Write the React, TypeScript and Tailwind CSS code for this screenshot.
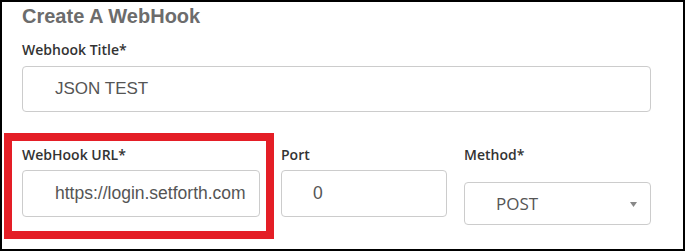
import React from "react";

const labelCls =
  "block text-[14px] leading-[20px] font-semibold text-[#333333] [font-family:'Open_Sans',sans-serif]";
const inputCls =
  "flex items-center border border-[#cccccc] rounded-[4px] bg-white text-[#555555] [font-family:'Liberation_Sans',Arial,sans-serif]";

export default function App() {
  return (
    <div className="relative w-[685px] h-[251px] border-2 border-black bg-white box-border overflow-hidden">
      <div className="pl-[20px] pt-[2px]">
        <h1 className="text-[20px] leading-[24px] font-bold text-[#6c6c6c] [font-family:'Liberation_Sans',Arial,sans-serif]">
          Create A WebHook
        </h1>
        <div className="mt-[12px]">
          <label className={labelCls}>Webhook Title*</label>
          <div className={`${inputCls} mt-[6px] w-[629px] h-[46px] pl-[32px] text-[17px]`}>
            JSON TEST
          </div>
        </div>
        <div className="mt-[33px] flex items-start">
          <div className="w-[238px]">
            <label className={labelCls}>WebHook URL*</label>
            <div className={`${inputCls} mt-[5px] w-[238px] h-[47px] pl-[32px] text-[17.5px] whitespace-nowrap overflow-hidden`}>
              https://login.setforth.com
            </div>
          </div>
          <div className="w-[166px] ml-[21px]">
            <label className={labelCls}>Port</label>
            <div className={`${inputCls} mt-[5px] w-[166px] h-[47px] pl-[31px] text-[17.5px]`}>
              0
            </div>
          </div>
          <div className="w-[187px] ml-[17px]">
            <label className={labelCls}>Method*</label>
            <div className="mt-[17px] w-[187px] h-[43px] flex items-center justify-between border border-[#cccccc] rounded-[4px] bg-white pl-[31px] pr-[13px] text-[17px] text-[#555555] [font-family:'Open_Sans',sans-serif]">
              <span>POST</span>
              <svg width="7" height="5" viewBox="0 0 7 5" className="mt-[1px]">
                <polygon points="0,0 7,0 3.5,5" fill="#888888" />
              </svg>
            </div>
          </div>
        </div>
      </div>
      <div className="absolute left-[2px] top-[131px] w-[270px] h-[106px] border-[8px] border-[#e41e26] pointer-events-none" />
    </div>
  );
}
